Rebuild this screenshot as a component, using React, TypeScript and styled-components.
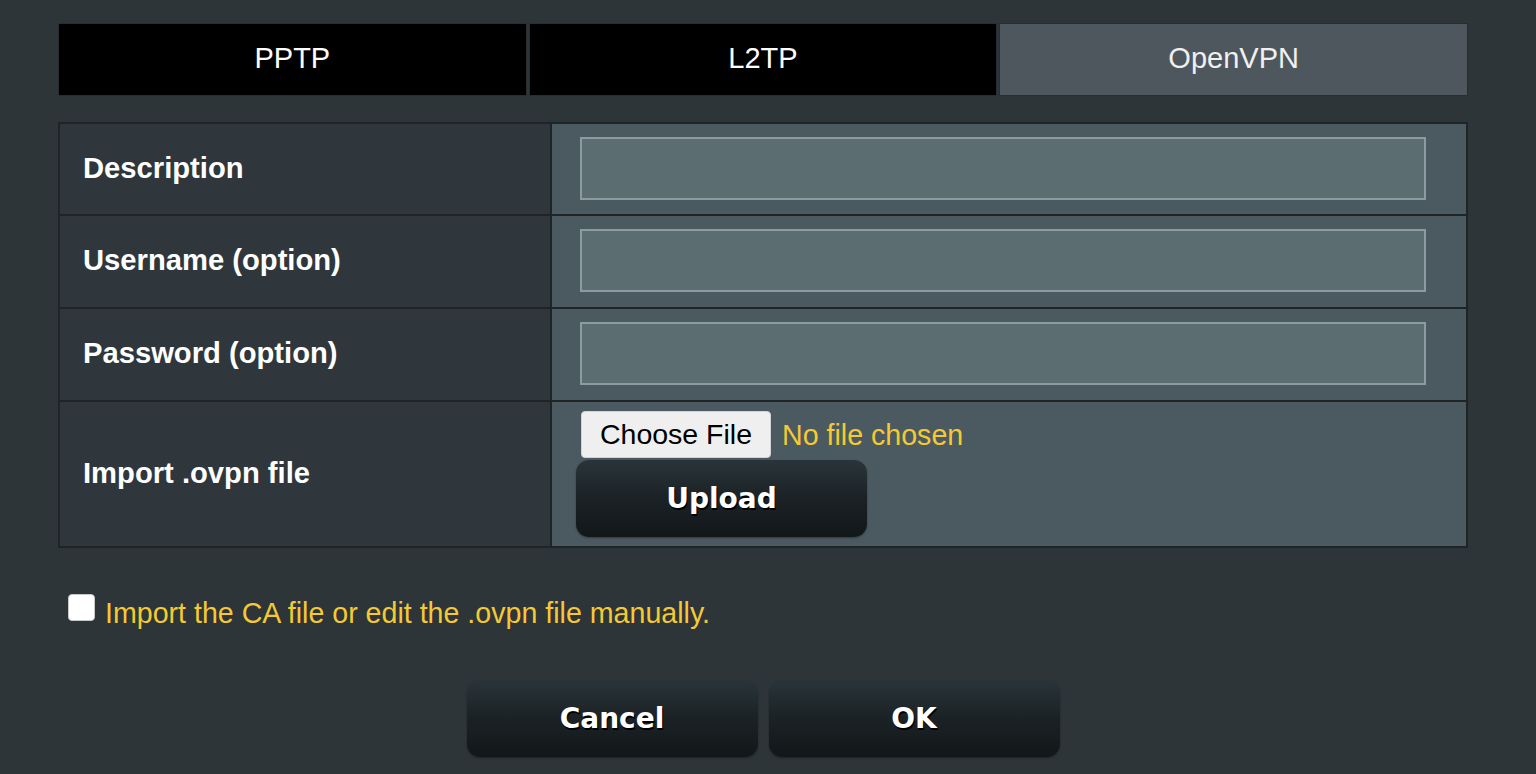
import React from "react";
import styled, { createGlobalStyle } from "styled-components";

const Global = createGlobalStyle`
  html, body { margin: 0; padding: 0; background: #2d3539; }
  body { font-family: "Liberation Sans", Arial, sans-serif; }
  * { box-sizing: border-box; }
`;

const Page = styled.div`
  width: 1536px;
  height: 774px;
  overflow: hidden;
  padding: 23px 68px 0 58px;
  background: #2d3539;
`;

const Tabs = styled.div`
  display: grid;
  grid-template-columns: repeat(3, 1fr);
  gap: 2px;
  width: 1410px;
  height: 73px;
`;

const Tab = styled.div<{ $active?: boolean }>`
  display: flex;
  align-items: center;
  justify-content: center;
  padding-bottom: 2px;
  background: ${(p) => (p.$active ? "#4f575e" : "#000")};
  border: 1px solid #2a2d30;
  color: ${(p) => (p.$active ? "#f0f0f0" : "#fff")};
  font-family: "Liberation Sans", Arial, sans-serif;
  font-size: 29px;
`;

const Table = styled.div`
  margin-top: 26px;
  width: 1410px;
  display: grid;
  grid-template-columns: 490px 1fr;
  grid-template-rows: 90px 91px 91px 144px;
  gap: 2px;
  background: #1f2427;
  border: 2px solid #1f2427;
`;

const Label = styled.div`
  display: flex;
  align-items: center;
  padding-left: 23px;
  padding-bottom: 2px;
  background: #2f373d;
  color: #fff;
  font-family: "Liberation Sans", Arial, sans-serif;
  font-weight: bold;
  font-size: 29.2px;
`;

const Value = styled.div`
  display: flex;
  flex-direction: column;
  justify-content: center;
  align-items: flex-start;
  background: #4b5a60;
  padding-left: 28px;
`;

const TextInput = styled.input`
  width: 846px;
  height: 63px;
  margin-top: -2px;
  background: #5c6d72;
  border: 2px solid #8b9b9f;
  outline: none;
  color: #fff;
  font-size: 24px;
  padding: 0 10px;
`;

const FileRow = styled.div`
  display: flex;
  align-items: center;
  gap: 11px;
  margin-left: 1px;
`;

const ChooseButton = styled.button`
  width: 190px;
  height: 47px;
  background: #efefef;
  border: 1px solid #d4d4d4;
  border-radius: 4px;
  color: #000;
  font-family: "Liberation Sans", Arial, sans-serif;
  font-size: 28.5px;
  padding: 0;
`;

const YellowText = styled.span<{ $drop?: number }>`
  color: #f5c934;
  font-family: "Liberation Sans", Arial, sans-serif;
  font-size: 28.6px;
  line-height: 32px;
  margin-top: ${(p) => p.$drop ?? 0}px;
`;

const DarkButton = styled.button`
  width: 291px;
  height: 77px;
  border: none;
  border-radius: 13px;
  background: linear-gradient(to bottom, #29343a 0%, #1b2225 50%, #121719 100%);
  box-shadow: 0 1px 2px rgba(0, 0, 0, 0.35);
  color: #fff;
  font-family: "DejaVu Sans", Verdana, sans-serif;
  font-weight: bold;
  font-size: 28px;
  text-shadow: 1px 2px 0 #000;
  padding: 0;
`;

const UploadWrap = styled.div`
  margin-top: 2px;
  margin-left: -4px;
`;

const CheckRow = styled.label`
  display: flex;
  align-items: flex-start;
  gap: 10px;
  height: 35px;
  margin-top: 46px;
  margin-left: 10px;
`;

const Check = styled.input`
  appearance: none;
  flex: none;
  width: 27px;
  height: 27px;
  margin: 0;
  background: #fff;
  border: 1px solid #c8c8c8;
  border-radius: 4px;
`;

const Actions = styled.div`
  display: flex;
  justify-content: center;
  gap: 11px;
  width: 1410px;
  margin-top: 51px;
`;

export default function App() {
  return (
    <>
      <Global />
      <Page>
        <Tabs>
          <Tab>PPTP</Tab>
          <Tab>L2TP</Tab>
          <Tab $active>OpenVPN</Tab>
        </Tabs>
        <Table>
          <Label>Description</Label>
          <Value>
            <TextInput />
          </Value>
          <Label>Username (option)</Label>
          <Value>
            <TextInput />
          </Value>
          <Label>Password (option)</Label>
          <Value>
            <TextInput type="password" />
          </Value>
          <Label>Import .ovpn file</Label>
          <Value>
            <FileRow>
              <ChooseButton>Choose File</ChooseButton>
              <YellowText>No file chosen</YellowText>
            </FileRow>
            <UploadWrap>
              <DarkButton>Upload</DarkButton>
            </UploadWrap>
          </Value>
        </Table>
        <CheckRow>
          <Check type="checkbox" />
          <YellowText $drop={3}>Import the CA file or edit the .ovpn file manually.</YellowText>
        </CheckRow>
        <Actions>
          <DarkButton>Cancel</DarkButton>
          <DarkButton>OK</DarkButton>
        </Actions>
      </Page>
    </>
  );
}
